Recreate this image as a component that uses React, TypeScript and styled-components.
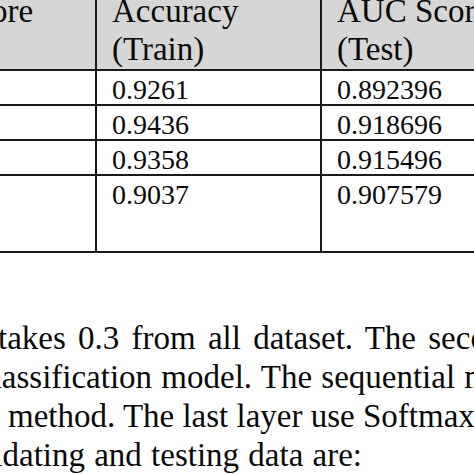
import React from 'react';
import styled, { createGlobalStyle } from 'styled-components';

const GlobalStyle = createGlobalStyle`
  html, body {
    margin: 0;
    padding: 0;
    background: #fff;
    overflow: hidden;
  }
  body {
    font-family: "Liberation Serif", "Times New Roman", serif;
    color: #0a0a0a;
  }
`;

const Page = styled.div`
  width: 474px;
  height: 474px;
  overflow: hidden;
  background: #fff;
`;

const ResultsTable = styled.div`
  display: grid;
  grid-template-columns: 154px 225px 220px;
  grid-template-rows: 79px 35px 35px 35px 77px;
  margin: -8px 0 0 -57px;
`;

const HeadCell = styled.div`
  box-sizing: border-box;
  background: #d6d6d6;
  border-right: 2px solid #1a1a1a;
  border-bottom: 2px solid #1a1a1a;
  padding: 0 15px;
  font-size: 33px;
  line-height: 38px;
  white-space: nowrap;
  overflow: hidden;
`;

const DataCell = styled.div`
  box-sizing: border-box;
  background: #fff;
  border-right: 2px solid #1a1a1a;
  border-bottom: 2px solid #1a1a1a;
  padding: 2px 15px 0;
  font-size: 28px;
  line-height: 33px;
  white-space: nowrap;
`;

const Paragraph = styled.div`
  margin-top: 66px;
  font-size: 33px;
  line-height: 39px;
`;

const Line = styled.div<{ $shift: number; $spacing?: number }>`
  white-space: nowrap;
  margin-left: ${({ $shift }) => `${$shift}px`};
  word-spacing: ${({ $spacing }) => `${$spacing ?? 0}px`};
`;

const rows = [
  ['', '0.9261', '0.892396'],
  ['', '0.9436', '0.918696'],
  ['', '0.9358', '0.915496'],
  ['', '0.9037', '0.907579'],
];

const lines = [
  { text: 'takes 0.3 from all dataset. The second', shift: -2, spacing: 4 },
  { text: 'classification model. The sequential model', shift: -22, spacing: 1 },
  { text: 'method. The last layer use Softmax', shift: 8, spacing: 0 },
  { text: 'validating and testing data are:', shift: -47, spacing: 1 },
];

const App = () => (
  <Page>
    <GlobalStyle />
    <ResultsTable>
      <HeadCell>Score</HeadCell>
      <HeadCell>
        Accuracy
        <br />
        (Train)
      </HeadCell>
      <HeadCell>
        AUC Score
        <br />
        (Test)
      </HeadCell>
      {rows.map((row, i) =>
        row.map((value, j) => <DataCell key={`${i}-${j}`}>{value}</DataCell>)
      )}
    </ResultsTable>
    <Paragraph>
      {lines.map((line) => (
        <Line key={line.text} $shift={line.shift} $spacing={line.spacing}>
          {line.text}
        </Line>
      ))}
    </Paragraph>
  </Page>
);

export default App;
